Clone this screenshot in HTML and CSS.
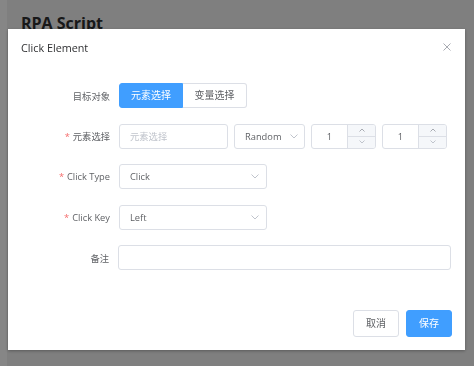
FILE: index.html
```html
<!DOCTYPE html>
<html lang="zh">

<head>
    <meta charset="UTF-8">
    <meta name="viewport" content="width=device-width, initial-scale=1.0">
    <title>RPA Script</title>
    <link rel="stylesheet" href="styles.css">
</head>

<body>
    <div class="page">
        <h1 class="page-title">RPA Script</h1>
    </div>

    <div class="mask"><div class="mask-side"></div></div>

    <div class="dialog">
        <div class="dialog-header">
            <span class="dialog-title">Click Element</span>
            <a class="dialog-close" href="javascript:;">
                <svg width="8" height="8" viewBox="0 0 8 8"><path d="M0.5 0.5L7.5 7.5M7.5 0.5L0.5 7.5" stroke="#a8abb2" stroke-width="1" fill="none"/></svg>
            </a>
        </div>

        <div class="dialog-body">
            <div class="form-item">
                <label class="form-label">目标对象</label>
                <div class="form-content">
                    <div class="radio-group">
                        <span class="radio-btn active">元素选择</span>
                        <span class="radio-btn">变量选择</span>
                    </div>
                </div>
            </div>

            <div class="form-item">
                <label class="form-label"><i class="req">*</i>元素选择</label>
                <div class="form-content">
                    <div class="input input-el"><span class="placeholder">元素选择</span></div>
                    <div class="select select-mode">
                        <span>Random</span>
                        <svg class="arrow" width="8" height="5" viewBox="0 0 8 5"><path d="M0.5 0.5L4 4L7.5 0.5" stroke="#c0c4cc" fill="none"/></svg>
                    </div>
                    <div class="number">
                        <span class="number-val">1</span>
                        <span class="spin">
                            <span class="spin-up"><svg width="6" height="4" viewBox="0 0 6 4"><path d="M0.5 3.5L3 1L5.5 3.5" stroke="#a8abb2" fill="none"/></svg></span>
                            <span class="spin-down"><svg width="6" height="4" viewBox="0 0 6 4"><path d="M0.5 0.5L3 3L5.5 0.5" stroke="#c0c4cc" fill="none"/></svg></span>
                        </span>
                    </div>
                    <div class="number">
                        <span class="number-val">1</span>
                        <span class="spin">
                            <span class="spin-up"><svg width="6" height="4" viewBox="0 0 6 4"><path d="M0.5 3.5L3 1L5.5 3.5" stroke="#a8abb2" fill="none"/></svg></span>
                            <span class="spin-down"><svg width="6" height="4" viewBox="0 0 6 4"><path d="M0.5 0.5L3 3L5.5 0.5" stroke="#c0c4cc" fill="none"/></svg></span>
                        </span>
                    </div>
                </div>
            </div>

            <div class="form-item">
                <label class="form-label"><i class="req">*</i>Click Type</label>
                <div class="form-content">
                    <div class="select select-wide">
                        <span>Click</span>
                        <svg class="arrow" width="8" height="5" viewBox="0 0 8 5"><path d="M0.5 0.5L4 4L7.5 0.5" stroke="#c0c4cc" fill="none"/></svg>
                    </div>
                </div>
            </div>

            <div class="form-item">
                <label class="form-label"><i class="req">*</i>Click Key</label>
                <div class="form-content">
                    <div class="select select-wide">
                        <span>Left</span>
                        <svg class="arrow" width="8" height="5" viewBox="0 0 8 5"><path d="M0.5 0.5L4 4L7.5 0.5" stroke="#c0c4cc" fill="none"/></svg>
                    </div>
                </div>
            </div>

            <div class="form-item">
                <label class="form-label">备注</label>
                <div class="form-content">
                    <div class="input input-full"></div>
                </div>
            </div>
        </div>

        <div class="dialog-footer">
            <a class="btn" href="javascript:;">取消</a>
            <a class="btn btn-primary" href="javascript:;">保存</a>
        </div>
    </div>
</body>

</html>
```

FILE: styles.css
```css
* {
    margin: 0;
    padding: 0;
    box-sizing: border-box;
}

body {
    background-color: #fff;
    font-family: "Open Sans", "Noto Sans CJK SC", sans-serif;
    color: #606266;
}

a {
    text-decoration: none;
}

.page {
    padding: 13px 21px;
}

.page-title {
    font-size: 16px;
    line-height: 20px;
    font-weight: 700;
    color: #303133;
}

.mask {
    position: fixed;
    top: 0;
    left: 0;
    width: 100%;
    height: 100%;
    background-color: rgba(0, 0, 0, 0.5);
}

.mask-side {
    width: 7px;
    height: 100%;
    background-color: rgba(255, 255, 255, 0.05);
}

.dialog {
    position: fixed;
    top: 29px;
    left: 8px;
    width: 457px;
    height: 321px;
    display: flex;
    flex-direction: column;
    background-color: #fff;
    box-shadow: 0 1px 3px rgba(0, 0, 0, 0.3);
}

.dialog-header {
    display: flex;
    align-items: center;
    justify-content: space-between;
    padding: 9px 14px 0 13px;
}

.dialog-title {
    font-size: 10.8px;
    line-height: 20px;
    color: #303133;
}

.dialog-close {
    display: flex;
    margin-top: -3px;
}

.dialog-body {
    padding: 25px 14px 0 15px;
}

.form-item {
    display: flex;
    align-items: center;
    height: 25px;
    margin-bottom: 15.5px;
}

.form-label {
    width: 96px;
    padding-right: 9px;
    text-align: right;
    font-size: 9.3px;
    color: #606266;
}

.req {
    font-style: normal;
    color: #f56c6c;
    margin-right: 3px;
}

.form-content {
    flex: 1;
    display: flex;
    gap: 6px;
    height: 25px;
}

.radio-group {
    display: flex;
}

.radio-btn {
    width: 64px;
    height: 25px;
    line-height: 23px;
    text-align: center;
    font-size: 10px;
    color: #606266;
    border: 1px solid #dcdfe6;
    border-left: none;
}

.radio-btn:first-child {
    border-radius: 3px 0 0 3px;
    border-left: 1px solid #dcdfe6;
}

.radio-btn:last-child {
    border-radius: 0 3px 3px 0;
}

.radio-btn.active {
    background-color: #409eff;
    border-color: #409eff;
    color: #fff;
}

.input,
.select,
.number {
    height: 25px;
    border: 1px solid #dcdfe6;
    border-radius: 3px;
    font-size: 9.3px;
    color: #606266;
}

.input {
    padding-left: 10px;
    line-height: 23px;
}

.placeholder {
    color: #c0c4cc;
}

.input-el {
    width: 109px;
}

.input-full {
    width: 333px;
}

.select {
    display: flex;
    align-items: center;
    justify-content: space-between;
    padding: 0 7px 0 10px;
}

.select-mode {
    width: 71px;
    padding-right: 6px;
}

.select-wide {
    width: 148px;
}

.number {
    display: flex;
    width: 65px;
    overflow: hidden;
}

.number-val {
    flex: 1;
    text-align: center;
    line-height: 23px;
}

.spin {
    width: 28px;
    display: flex;
    flex-direction: column;
    background-color: #f5f7fa;
    border-left: 1px solid #dcdfe6;
}

.spin-up,
.spin-down {
    flex: 1;
    display: flex;
    align-items: center;
    justify-content: center;
}

.spin-up {
    border-bottom: 1px solid #dcdfe6;
}

.dialog-footer {
    margin-top: auto;
    display: flex;
    justify-content: flex-end;
    gap: 7px;
    padding: 0 13px 13px 0;
}

.btn {
    width: 46px;
    height: 27px;
    line-height: 25px;
    text-align: center;
    font-size: 10px;
    color: #606266;
    border: 1px solid #dcdfe6;
    border-radius: 3px;
    background-color: #fff;
}

.btn-primary {
    background-color: #409eff;
    border-color: #409eff;
    color: #fff;
}
```
